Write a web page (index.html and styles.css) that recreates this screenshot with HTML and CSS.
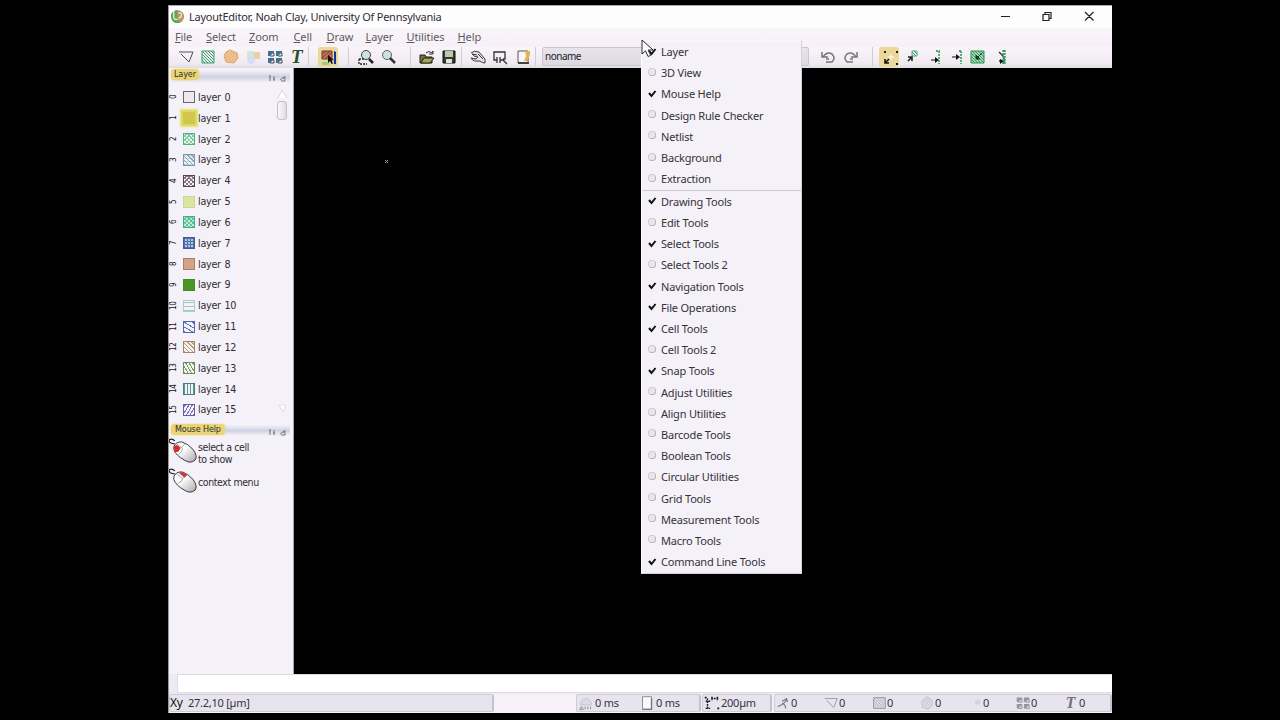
FILE: index.html
```html
<!DOCTYPE html>
<html lang="en">
<head>
<meta charset="utf-8">
<title>LayoutEditor</title>
<link rel="stylesheet" href="styles.css">
</head>
<body>
<svg width="0" height="0" class="defs">
  <defs>
    <pattern id="hg" width="3" height="3" patternUnits="userSpaceOnUse"><path d="M0 0L3 3" stroke="#2f9c62" stroke-width="1"/></pattern>
    <pattern id="ho" width="3" height="3" patternUnits="userSpaceOnUse"><path d="M0 3L3 0" stroke="#dd9a55" stroke-width=".8"/></pattern>
    <pattern id="hk" width="3" height="3" patternUnits="userSpaceOnUse"><path d="M0 0L3 3" stroke="#8b8692" stroke-width=".7"/></pattern>
    <linearGradient id="ms" x1="0" y1="0" x2="1" y2="1"><stop offset=".4" stop-color="#fff"/><stop offset="1" stop-color="#aaa5aa"/></linearGradient>
  </defs>
</svg>
<div class="window">
  <header class="titlebar">
    <svg class="logo" viewBox="0 0 16 16"><circle cx="8" cy="8" r="6.8" fill="#8b8f80"/><path d="M2 4Q5 0 9 2L8 9L13 13Q7 17 3 13Q0 9 2 4" fill="#58a552"/><path d="M8 2Q14 2 15 8Q14 13 10 14Q6 10 8 2" fill="#bd935f"/><path d="M4 2v7q1 3 4 2M9 4q4 0 3 4l-3 2" stroke="#e8e8da" stroke-width="1.5" fill="none"/></svg>
    <span class="title">LayoutEditor, Noah Clay, University Of Pennsylvania</span>
    <svg class="controls" viewBox="0 0 100 20" fill="none" stroke="#222" stroke-width="1.2"><path d="M1 10.5h9M43 8.5h6v6h-6zM45 8.5v-2h6v6h-2M85 6l8.500 8.500M93.500 6L85 14.500"/></svg>
  </header>
  <nav class="menubar" id="menubar"></nav>
  <div class="toolbar" id="toolbar"></div>
  <main class="workspace">
    <aside class="sidebar">
      <div class="dock-head"><span class="dock-title">Layer</span><svg class="dock-icons" viewBox="0 0 22 8"><path d="M2 2v5M1 2h2M6 2v5M5 5h2M12 6l4-3M13 7h4v-4M17 2l-2 3" stroke="#77737f" fill="none"/></svg></div>
      <div class="layers">
        <div id="layers"></div>
        <div class="scroll"><svg viewBox="0 0 12 12"><path d="M1 10L5 2L10 10" fill="#fff" stroke="#d8d4dd"/></svg><div class="thumb"></div><div class="spring"></div><svg class="down" viewBox="0 0 12 12"><path d="M2 2h7L6 9z" fill="#fff" stroke="#e0dce6"/></svg></div>
      </div>
      <div class="dock-head second"><span class="dock-title wide">Mouse Help</span><svg class="dock-icons" viewBox="0 0 22 8"><path d="M2 2v5M1 2h2M6 2v5M5 5h2M12 6l4-3M13 7h4v-4M17 2l-2 3" stroke="#77737f" fill="none"/></svg></div>
      <div class="help"><svg viewBox="0 0 30 28"><path d="M6 6Q0 6 0 2Q3 0 6 3" fill="none" stroke="#222" stroke-width="1.300"/><path d="M5 9Q7 4 13 4Q20 6 25 12Q30 19 27 23Q22 27 16 23Q7 18 5 12z" fill="url(#ms)" stroke="#333"/><path d="M5 9l3-2l4 3l-2 4l-4 1z" fill="#d52a2e"/><path d="M8 6l6 5q0 3-4 6M13 10l4-5" fill="none" stroke="#777" stroke-width=".7"/></svg><span>select a cell<br>to show</span></div>
      <div class="help"><svg viewBox="0 0 30 28"><path d="M6 6Q0 6 0 2Q3 0 6 3" fill="none" stroke="#222" stroke-width="1.300"/><path d="M5 9Q7 4 13 4Q20 6 25 12Q30 19 27 23Q22 27 16 23Q7 18 5 12z" fill="url(#ms)" stroke="#333"/><path d="M10 5l5-1l4 3l-3 3z" fill="#c93a42"/><path d="M8 6l6 5q0 3-5 5M14 11l5-4" fill="none" stroke="#777" stroke-width=".7"/></svg><span class="single">context menu</span></div>
    </aside>
    <div class="canvas"><svg class="origin" viewBox="0 0 5 5"><path d="M1 1l3 3M4 1L1 4" stroke="#aaa"/></svg></div>
  </main>
  <div class="command"><div class="command-input"></div></div>
  <footer class="status" id="status"></footer>
</div>
<div class="popup" id="popup"></div>
<svg class="pointer" viewBox="0 0 14 20"><path d="M1 1v14l3.500-3.200l2.600 5.700l2.600-1.200l-2.600-5.300h5z" fill="#fff" stroke="#28242c"/></svg>
<script src="app.js"></script>
</body>
</html>
```
FILE: styles.css
```css
* { box-sizing: border-box; }
body { margin: 0; width: 1280px; height: 720px; background: #000; overflow: hidden; font-family: "Noto Sans", sans-serif; font-size: 11px; color: #302c34; }
svg { display: block; flex: none; }
.defs { position: absolute; }
.window { width: 944px; height: 708px; margin: 5px 0 0 168px; background: #f5f1f7; display: flex; flex-direction: column; border-top: 1px solid #aaa; border-left: 1px solid #999; }
.titlebar { height: 22px; background: #fefdfe; display: flex; align-items: center; padding: 0 0 2px 1px; flex: none; }
.logo { width: 15px; height: 15px; margin-right: 4px; }
.title { font-size: 11px; letter-spacing: -0.25px; white-space: nowrap; flex: 1; }
.controls { width: 100px; height: 20px; margin-right: 12px; margin-top: -1px; }
.menubar { height: 19px; display: flex; align-items: center; padding: 0 0 1px 6px; flex: none; background: linear-gradient(#faf5fa, #f7f1f7); color: #5d5961; }
.menubar span { line-height: 18px; white-space: nowrap; letter-spacing: -0.1px; }
.menubar span::first-letter { text-decoration: underline; }
.toolbar { height: 21px; flex: none; display: flex; background: linear-gradient(#f9f5fa, #eeeaf0 80%, #dfdce2); }
.group { display: flex; align-items: center; border-right: 1px solid #d0ccd4; height: 19px; flex: none; }
.group.last { border: 0; }
.cell { display: flex; justify-content: center; align-items: center; flex: none; width: 22.300px; height: 20px; }
.cell svg { width: 20px; height: 20px; }
.cell.on svg { background: #ead79a; border-radius: 3px; }
.combo { width: 267px; height: 19px; margin: 0 8px 0 6px; flex: none; border: 1px solid #c9c6d0; border-radius: 2px; background: linear-gradient(#e7e4ec, #dcd9e2); padding: 0 2px; line-height: 17px; font-size: 10px; letter-spacing: -0.5px; color: #222; }
.workspace { display: flex; height: 606px; flex: none; }
.sidebar { width: 125px; border-right: 1px solid #aaa5ac; background: #f5f1f8; flex: none; }
.dock-head { height: 15px; width: 119px; display: flex; justify-content: space-between; align-items: center; margin-left: 2px; background: linear-gradient(#f5f1f8 15%, #cbd2e3 60%, #dfe1ed 75%, #f5f1f8); }
.dock-head.second { height: 13px; }
.dock-title { font-family: "DejaVu Sans Condensed", "DejaVu Sans", sans-serif; font-size: 9px; letter-spacing: -0.15px; line-height: 11px; padding: 0 3px; background: #ead577; border-radius: 4px; box-shadow: 0 0 2px #ead577; margin-top: -2px; }
.dock-title.wide { padding: 0 4px; margin-top: 0; }
.dock-icons { width: 22px; height: 8px; margin-top: 4px; }
.layers { height: 340px; display: flex; justify-content: space-between; padding-top: 4px; }
.layer { display: flex; align-items: center; height: 20.83px; font-family: "DejaVu Sans Condensed", "DejaVu Sans", sans-serif; font-size: 10.700px; letter-spacing: -0.28px; word-spacing: 1px; white-space: nowrap; }
.num { writing-mode: vertical-rl; transform: rotate(180deg); width: 10px; font-size: 8px; line-height: 10px; text-align: center; letter-spacing: -0.4px; height: 14px; color: #111; }
.swatch { width: 12px; height: 12px; margin: 0 3px 0 4px; border: 1px solid; flex: none; }
.swatch.sel { box-shadow: 0 0 0 2px #ddd85e, 0 0 2px 3px #e5e080; }
.scroll { width: 12px; margin-right: 4px; display: flex; flex-direction: column; padding-top: 1px; }
.scroll svg { width: 12px; height: 12px; }
.scroll .down { margin-bottom: 8px; }
.thumb { width: 10px; height: 19px; border: 1px solid #c3bfc9; border-radius: 3px; background: linear-gradient(90deg, #faf8fb, #dfdbe4); margin-top: 1px; }
.spring { flex: 1; }
.help { display: flex; align-items: center; height: 30px; font-family: "DejaVu Sans Condensed", "DejaVu Sans", sans-serif; font-size: 10.500px; letter-spacing: -0.4px; line-height: 12px; white-space: nowrap; }
.help svg { width: 29px; height: 27px; }
.help span { padding-top: 3px; }
.help .single { padding-top: 2px; }
.canvas { flex: 1; background: #000; }
.origin { width: 5px; height: 5px; margin: 91px 0 0 90px; }
.command { height: 20px; flex: none; padding-left: 8px; background: #eeeaf1; }
.command-input { height: 19px; background: #fff; border: 1px solid #dedbe2; border-right: 0; }
.status { height: 19px; display: flex; flex: none; font-size: 11px; color: #37333c; }
.box { height: 18px; border: 1px solid #ceccd5; border-right: 2px solid #c5c2cd; border-radius: 2px; background: #e7e4ed; display: flex; align-items: center; flex: none; padding-bottom: 1px; letter-spacing: -0.25px; }
.xy { width: 18px; font-size: 12px; color: #111; }
.stat { display: flex; align-items: center; white-space: nowrap; flex: none; }
.stat svg { width: 18px; height: 18px; }
.counts svg { margin: 0 -1px; }
.popup { position: absolute; left: 641px; top: 40px; width: 161px; height: 534px; background: #f5f1f8; border: 1px solid #d5d1da; border-top-color: #f9f5fa; border-left-color: #fff; }
.option { height: 21.200px; display: flex; align-items: center; padding-left: 4px; color: #35313a; white-space: nowrap; letter-spacing: -0.2px; }
.option svg { width: 12px; height: 12px; margin-right: 3px; }
.divider { height: 1px; background: #cfcbd5; margin: 1px 0 -0.5px; }
.pointer { position: absolute; left: 641px; top: 39px; width: 14px; height: 20px; }
```
FILE: app.js
```js
const byId = id => document.getElementById(id);

const menus = [["File",31],["Select",43],["Zoom",44.5],["Cell",33],["Draw",39],["Layer",41],["Utilities",51],["Help",30]];
byId("menubar").innerHTML = menus.map(([t, w]) => `<span style="width:${w}px;flex:none">${t}</span>`).join("");

const svg = body => `<svg viewBox="0 0 20 20" fill="none">${body}</svg>`;
const cells = '<g fill="#3e6f94"><path d="M3 4h6v2l-2 1l-2 2H3zM11 4h6v2l-2 1l-2 2h-2zM3 11h6v2l-2 1l-2 2H3zM11 11h6v2l-2 1l-2 2h-2z"/></g><g stroke="#222" stroke-width=".8"><path d="M5 9h4v-3M13 9h4v-3M5 16h4v-3M13 16h4v-3"/></g>';
const icons = {
  tri: svg('<path d="M3 5h14l-4 10l-8-8" stroke="#50505c"/>'),
  hatch: svg('<path d="M4 4h12v12H4z" fill="url(#hg)" stroke="#37a36b"/>'),
  poly: svg('<path d="M9 3l7 3l1 5l-4 5l-8-1l-2-6l2-4z" fill="#f2c99b"/><path d="M9 3l7 3l1 5l-4 5l-8-1l-2-6l2-4z" fill="url(#ho)" stroke="#e2a56b"/>'),
  bool: svg('<path d="M4 4h7v7H4z" fill="#ccead8"/><path d="M11 5h6v7h-6z" fill="#efcda9"/><circle cx="8" cy="13" r="4" fill="#d9dcf6"/>'),
  cells: svg(cells),
  text: svg('<text x="3" y="16" font-family="Liberation Serif" font-size="19" font-weight="bold" font-style="italic" fill="#28502e">T</text>'),
  select: svg('<path d="M4 4h10v8H4z" fill="#ca715a" stroke="#76382f"/><path d="M4 7l4-3M4 11l8-7M7 12l7-7" stroke="#783e35"/><path d="M16 4v13h2V5z" fill="#1630a8"/><path d="M4 15h7v3H4z" fill="#9bcf89"/><path d="M10 8v8l2-2l1.500 3l1.500-.7l-1.500-3h2.500z" fill="#111"/>'),
  zoomBox: svg('<circle cx="10" cy="8" r="4.500" fill="#cde1df" stroke="#39433f"/><path d="M13 12l4 4" stroke="#222" stroke-width="2.500"/><path d="M3 12v5h8M3 12h6" stroke="#222" stroke-width="1.300" stroke-dasharray="2 1"/>'),
  zoom: svg('<circle cx="9" cy="8" r="4.500" fill="#cde1df" stroke="#59615f"/><path d="M12 11l5 5" stroke="#333" stroke-width="2.500"/>'),
  open: svg('<path d="M3 8h5l1 2h6v6H3z" fill="#72723b" stroke="#222"/><path d="M4 16l3-5h10l-4 5z" fill="#a9a750" stroke="#222"/><path d="M9 6q3-3 6 0l1-2v3h-4" stroke="#333"/>'),
  save: svg('<path d="M4 4h12v12H4z" fill="#333b2c" stroke="#111"/><path d="M6 4h8v6H6z" fill="#b8c9ad"/><path d="M7 12h6v4H7z" fill="#e1e4d9"/>'),
  wrench: svg('<path d="M3 6q3-3 8-1l6 7v4q-3 0-5-2q-7 1-9-3l5 1l2-2q-4 0-6-3l5 1M10 7l5 5" fill="#e5e2e7" stroke="#3b373d"/>'),
  route: svg('<path d="M7 13H4V5h11v7h-2M7 10v6M10 10v6M10 13h3l4 4" stroke="#333" stroke-width="1.3"/>'),
  note: svg('<path d="M5 4h10v12H5z" fill="#f8f6fa" stroke="#555"/><path d="M12 4h5v4l-3 6h-3l2-5z" fill="#e3b456"/><path d="M5 16h11" stroke="#222" stroke-width="1.5"/>'),
  undo: svg('<path d="M4 5v5h6M5 10q4-6 9-3q4 4 0 8H8M8 12h3" stroke="#77737a" stroke-width="1.500"/>'),
  redo: svg('<path d="M17 5v5h-6M16 10Q12 4 7 7q-4 4 0 8h6M10 12h3" stroke="#7a777d" stroke-width="1.500"/>'),
  snapGrid: svg('<path d="M5 4h2v2H5zM17 4h2v2h-2zM17 16h2v2h-2z" fill="#211d14"/><path d="M6 16l4-4M6 12v4h4" stroke="#16130b" stroke-width="1.6"/><path d="M9 10h6M12 7v6" stroke="#fff"/>'),
  snapPoint: svg('<path d="M11 4h5v5h-5z" fill="url(#hg)" stroke="#50ae7a"/><path d="M7 14l4-4M7 10h4v4" stroke="#222" stroke-width="1.6"/>'),
  snapEdge: svg('<path d="M7 13h5" stroke="#111"/><path d="M11 10l4 3l-4 3z" fill="#111"/><path d="M12 4h4M15 4v13" stroke="#3eaa6c" stroke-width="1.800" stroke-dasharray="2 1"/>'),
  snapSide: svg('<path d="M6 10h5" stroke="#111"/><path d="M10 7l4 3l-4 3z" fill="#111"/><path d="M13 4h3M15 4v13" stroke="#3eaa6c" stroke-width="1.800" stroke-dasharray="2 1"/>'),
  snapFill: svg('<path d="M3 4h13v12H3z" fill="#a5d7b5"/><path d="M3 4h13v12H3z" fill="url(#hg)" stroke="#2c9155"/><path d="M8 8v4h4zM9 11l5-5" fill="#173b21" stroke="#173b21"/>'),
  snapMix: svg('<path d="M8 5l5 5v6M8 14h3" stroke="#2b3030" stroke-width="1.3"/><path d="M9 12l4 2l-4 3z" fill="#111"/><path d="M13 3v14" stroke="#36a263" stroke-width="3.500" stroke-dasharray="2 1"/>'),
  gauge: svg('<path d="M4 12a6 7 0 1 1 12 0z" fill="#dedae1" stroke="#c6c1cc"/><path d="M3 17l2-3l2 3zM9 14v3m3-3v3m3-3v3" stroke="#88838d"/>'),
  page: svg('<path d="M5 3h10v14H5z" fill="#faf8fb" stroke="#88838e"/><path d="M15 5v12H5" stroke="#77737b" stroke-width="1.500"/>'),
  ruler: svg('<path d="M5 5v12M3 8h5M3 16h5M9 5h8M10 3v4M16 3v4" stroke="#171419" stroke-width="1.600" stroke-dasharray="2 1"/><path d="M16 15h2v2h-2zM2 3h2v2H2z" fill="#111"/>'),
  angle: svg('<path d="M4 14Q11 12 14 6M9 10q4 2 4 6M9 8l5-3l1 4" stroke="#77727c" stroke-width="1.200"/>'),
  gHatch: svg('<path d="M4 4h13v12H4z" fill="url(#hk)" stroke="#9994a1"/>'),
  gPoly: svg('<path d="M10 3l6 4v6l-5 4l-6-2l-1-7z" fill="url(#hk)" stroke="#b9b4bf" opacity=".7"/>'),
  dot: svg('<circle cx="13" cy="9" r="3" fill="#d7d3dd"/>'),
  gText: svg('<text x="4" y="16" font-family="Liberation Serif" font-size="18" font-weight="bold" font-style="italic" fill="#77727c">T</text>')
};

const group = (width, pad, names, cls = "") => `<div class="group ${cls}" style="width:${width}px;padding-left:${pad}px">${names.map(n => `<div class="cell ${n === "select" || n === "snapGrid" ? "on" : ""}">${icons[n]}</div>`).join("")}</div>`;
byId("toolbar").innerHTML =
  group(140, 6, ["tri","hatch","poly","bool","cells","text"]) + group(40, 8, ["select"]) +
  group(62, 6, ["zoomBox","zoom"]) + group(51, 5, ["open","save"]) + group(74, 5, ["wrench","route","note"]) +
  '<div class="combo">noname</div>' + group(56, 0, ["undo","redo"]) +
  group(142, 5, ["snapGrid","snapPoint","snapEdge","snapSide","snapFill","snapMix"], "last");

const stripe = (angle, color, gap = 3) => `repeating-linear-gradient(${angle}deg, ${color} 0 1px, transparent 1px ${gap}px)`;
const swatches = [
  ["#6b6570", "#eee8ef"], ["#cfc64e", "#d0c74c"],
  ["#49b778", stripe(45, "#79d09d") + "," + stripe(-45, "#79d09d")],
  ["#7799aa", stripe(45, "#86a9bb") + "," + stripe(0, "#c4dce4")],
  ["#52454e", stripe(45, "#8a7782") + "," + stripe(-45, "#8a7782")],
  ["#cbd98e", "#d9e5a0"],
  ["#43ae85", stripe(45, "#54bd93") + "," + stripe(-45, "#74cba8") + ",linear-gradient(#bfe8d8,#bfe8d8)"],
  ["#405e98", stripe(0, "#5272a5") + "," + stripe(90, "#5272a5") + ",linear-gradient(#aec5e3,#aec5e3)"],
  ["#a77f66", "#d1a488"], ["#438b24", "#4b9623"],
  ["#a8cfc9", stripe(0, "#9ccdc5", 4)], ["#5267ae", stripe(30, "#6075bf", 4)],
  ["#a28663", stripe(45, "#b99b72")], ["#688e56", stripe(60, "#789f64")],
  ["#477f7b", stripe(90, "#5c9994")], ["#655fa7", stripe(-60, "#7771b9")]
];
byId("layers").innerHTML = swatches.map(([edge, fill], i) =>
  `<div class="layer"><span class="num">${i}</span><span class="swatch ${i === 1 ? "sel" : ""}" style="border-color:${edge};background:${fill}"></span>layer ${i}</div>`).join("");

const options = "*Layer|3D View|*Mouse Help|Design Rule Checker|Netlist|Background|Extraction|-|*Drawing Tools|Edit Tools|*Select Tools|Select Tools 2|*Navigation Tools|*File Operations|*Cell Tools|Cell Tools 2|*Snap Tools|Adjust Utilities|Align Utilities|Barcode Tools|Boolean Tools|Circular Utilities|Grid Tools|Measurement Tools|Macro Tools|*Command Line Tools".split("|");
const check = '<svg viewBox="0 0 12 12"><path d="M3 5l2.500 3l4-5" fill="none" stroke="#111" stroke-width="2"/></svg>';
const empty = '<svg viewBox="0 0 12 12"><rect x="2.500" y="1.500" width="7" height="7" rx="2.500" fill="#e9e5ec" stroke="#d0ccd5"/><path d="M9.500 3v3q0 2.500-2.500 2.500H4" fill="none" stroke="#bbb6c1"/></svg>';
byId("popup").innerHTML = options.map(o => o === "-" ? '<div class="divider"></div>' :
  `<div class="option">${o[0] === "*" ? check : empty}${o.replace("*", "")}</div>`).join("");

const stat = (width, icon, text) => `<span class="stat" style="width:${width}px">${icon}${text}</span>`;
const grayTri = icons.tri.replace("#50505c", "#9994a1");
const grayCells = icons.cells.replace("#3e6f94", "#99949f").replace("#222", "#777");
const counts = [icons.angle, grayTri, icons.gHatch, icons.gPoly, icons.dot, grayCells, icons.gText];
byId("status").innerHTML =
  '<div class="box" style="width:325px"><span class="xy">Xy</span>27.2,10 [µm]</div>' +
  `<div class="box" style="width:125px;margin-left:82px">${stat(61, icons.gauge, "0 ms")}${stat(60, icons.page, "0 ms")}</div>` +
  `<div class="box" style="width:70px;margin-left:1px">${stat(67, icons.ruler, "200µm")}</div>` +
  `<div class="box counts" style="width:338px;margin-left:2px">${counts.map((icon, i) => stat(i < 6 ? 48 : 40, icon, "0")).join("")}</div>`;
```
